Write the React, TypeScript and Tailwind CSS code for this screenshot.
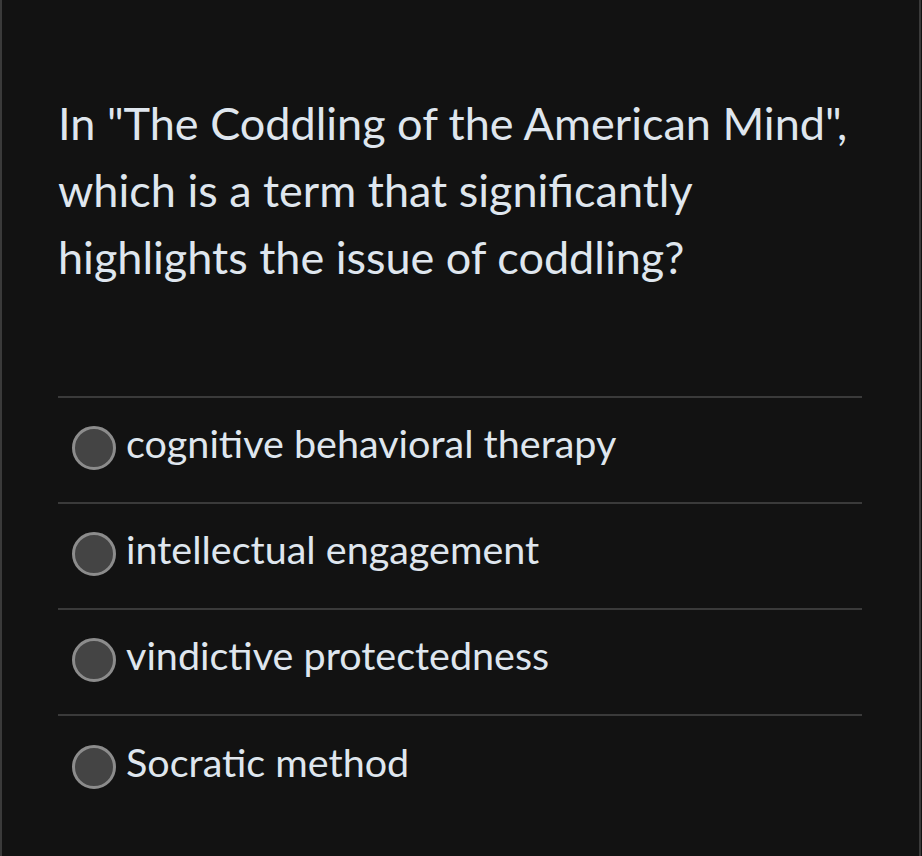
export default function App() {
  const options = [
    "cognitive behavioral therapy",
    "intellectual engagement",
    "vindictive protectedness",
    "Socratic method",
  ];

  return (
    <div className="h-[856px] w-[922px] bg-[#121212] font-['Lato',sans-serif]">
      <div className="h-full w-[921px] border-x-2 border-[#3a3a3a] pl-[56px] pr-[57px] pt-[90px]">
        <h1 className="text-[45px] font-normal leading-[67px] text-[#dfe6ee]">
          In "The Coddling of the American Mind", which is a term that significantly highlights the issue of coddling?
        </h1>

        <div className="mt-[105px] border-t-2 border-[#3a3a3a]">
          {options.map((opt) => (
            <div key={opt} className="flex h-[106px] items-center gap-[10px] border-b-2 border-[#3a3a3a] pl-[14px] last:border-b-0">
              <span className="mb-[4px] h-[44px] w-[44px] shrink-0 rounded-full border-[3px] border-[#8c8c8c] bg-[#444444]" />
              <span className="pb-[14px] text-[39.5px] leading-none text-[#dfe6ee]">{opt}</span>
            </div>
          ))}
        </div>
      </div>
    </div>
  );
}
